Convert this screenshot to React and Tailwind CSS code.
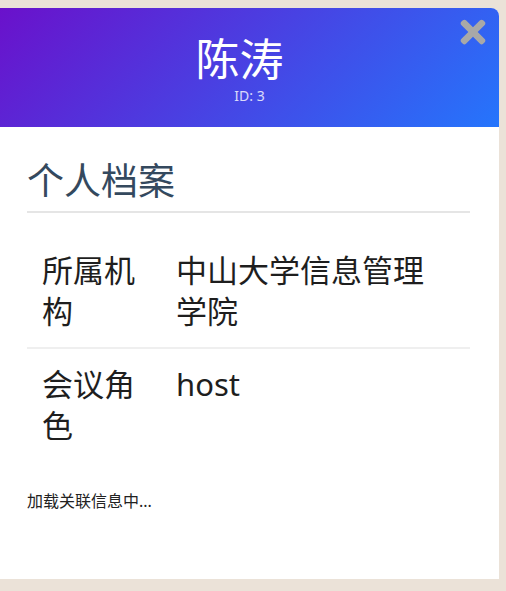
import { FaTimes } from "react-icons/fa";

const rows = [
  { label: "所属机构", value: "中山大学信息管理学院" },
  { label: "会议角色", value: "host" },
];

function App() {
  return (
    <div
      className="min-h-[591px] bg-[#ebe2d8] pt-2"
      style={{ fontFamily: '"Noto Sans", "Noto Sans CJK SC", sans-serif' }}
    >
      {/* Profile card */}
      <div className="relative w-[499px] h-[571px] bg-white rounded-tr-lg overflow-hidden">
        {/* Header */}
        <div className="h-[119px] bg-[linear-gradient(135deg,#6a11cb,#2575fc)] flex flex-col items-center pt-[29px]">
          <h1 className="text-[44px] leading-[44px] text-white pr-[20px]">陈涛</h1>
          <p className="text-[14px] leading-[18px] text-white/80 mt-[6px]">ID: 3</p>
        </div>

        <button className="absolute top-[6px] right-[8px] text-[#a8a8a8]">
          <FaTimes size={36} />
        </button>

        {/* Body */}
        <div className="pl-[27px] pr-[29px]">
          <h2 className="mt-[31px] text-[37px] leading-[46px] text-[#34495e] pb-[7px] border-b-2 border-[#e5e5e5]">
            个人档案
          </h2>

          <div className="mt-[22px]">
            {rows.map((r, i) => (
              <div
                key={r.label}
                className={
                  "flex py-[15px] text-[31px] leading-[41px] text-[#1e1e1e] " +
                  (i < rows.length - 1 ? "border-b-2 border-[#efefef]" : "")
                }
              >
                <div className="w-[134px] px-[15px]">{r.label}</div>
                <div className="w-[290px] pl-[15px]">{r.value}</div>
              </div>
            ))}
          </div>

          <p className="mt-[30px] text-[16px] leading-[20px] text-[#222]">加载关联信息中...</p>
        </div>
      </div>
    </div>
  );
}

export default App;
